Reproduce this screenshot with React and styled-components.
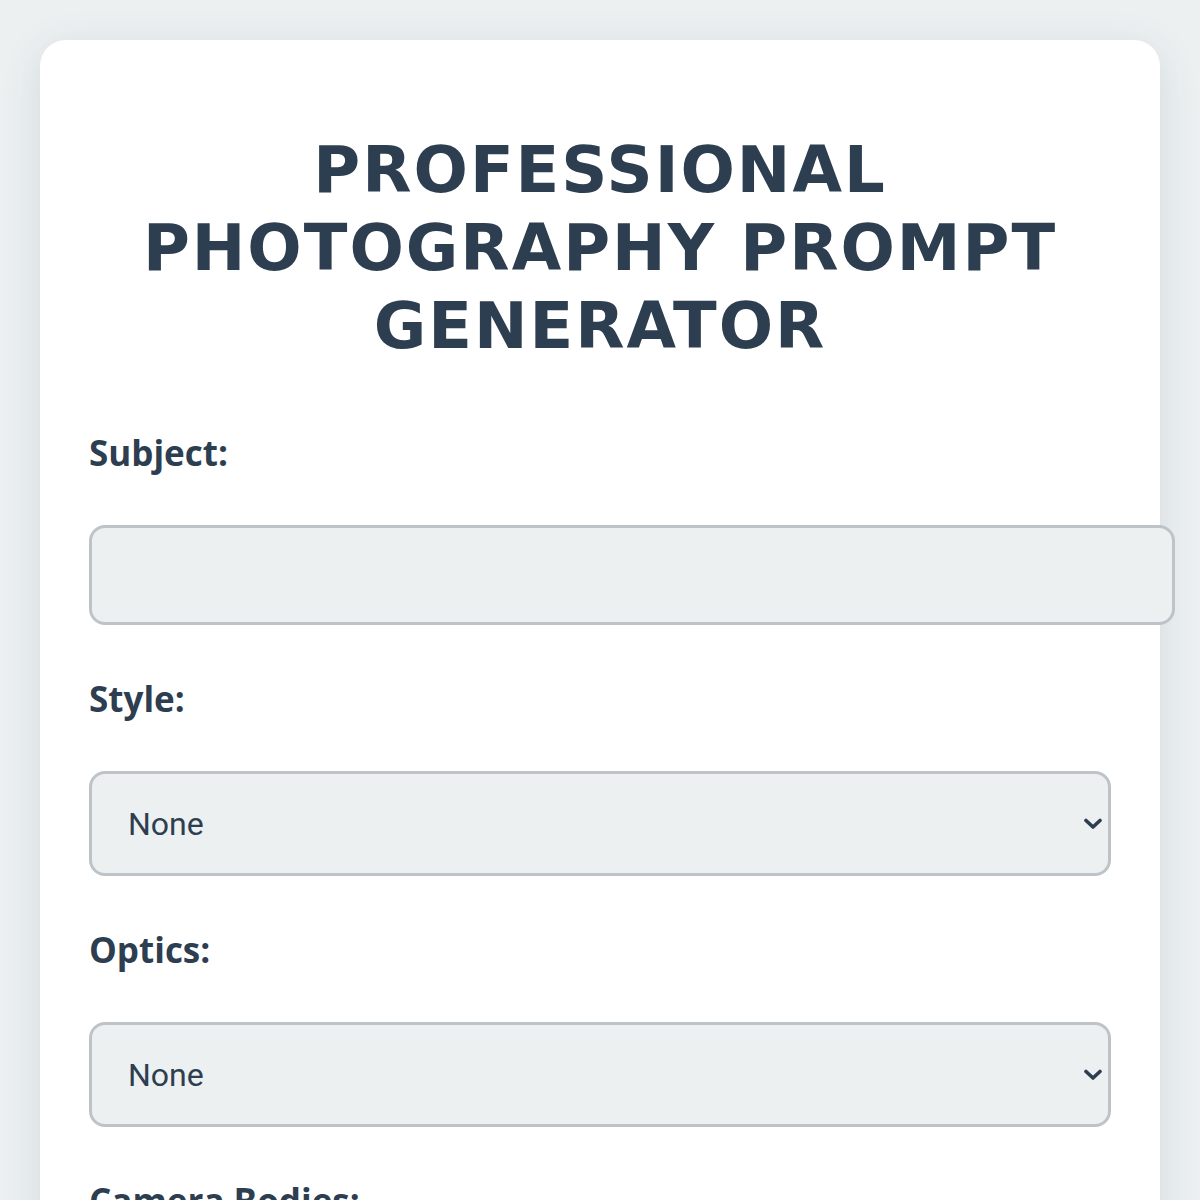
import React, { useState } from "react";
import styled, { createGlobalStyle } from "styled-components";

const GlobalStyle = createGlobalStyle`
  body {
    margin: 0;
    background: #ecf0f1;
    font-family: "Open Sans", "Noto Sans", sans-serif;
    color: #2c3e50;
  }
`;

const styles = ["None", "Portrait", "Landscape", "Street", "Fashion", "Macro"];
const optics = ["None", "Wide Angle", "Telephoto", "Fisheye", "Tilt-Shift"];
const bodies = ["None", "Canon EOS R5", "Nikon Z9", "Sony A1", "Leica M11"];

const Chevron = () => (
  <svg width="18" height="12" viewBox="0 0 18 12">
    <path
      d="M2 2.5 L9 9 L16 2.5"
      fill="none"
      stroke="#2c3e50"
      strokeWidth="3.6"
      strokeLinecap="round"
      strokeLinejoin="round"
    />
  </svg>
);

const SelectField = ({ label, options }) => {
  const [value, setValue] = useState(options[0]);
  return (
    <Field>
      <Label>{label}</Label>
      <SelectWrap>
        <Select value={value} onChange={(e) => setValue(e.target.value)}>
          {options.map((o) => (
            <option key={o}>{o}</option>
          ))}
        </Select>
        <Arrow>
          <Chevron />
        </Arrow>
      </SelectWrap>
    </Field>
  );
};

const App = () => {
  const [subject, setSubject] = useState("");

  return (
    <>
      <GlobalStyle />
      <Page>
        <Card>
          <Title>Professional Photography Prompt Generator</Title>
          <Field>
            <Label>Subject:</Label>
            <Input
              type="text"
              value={subject}
              onChange={(e) => setSubject(e.target.value)}
            />
          </Field>
          <SelectField label="Style:" options={styles} />
          <SelectField label="Optics:" options={optics} />
          <SelectField label="Camera Bodies:" options={bodies} />
        </Card>
      </Page>
    </>
  );
};

export default App;

const Page = styled.div`
  padding: 40px;
`;

const Card = styled.div`
  background: #ffffff;
  border-radius: 26px;
  padding: 48px 49px;
  box-shadow: 0 8px 40px rgba(44, 62, 80, 0.12);
`;

const Title = styled.h1`
  margin: 43px 0 66px;
  text-align: center;
  text-transform: uppercase;
  font-family: "DejaVu Sans", sans-serif;
  font-weight: 700;
  font-size: 64px;
  line-height: 78px;
  letter-spacing: 2px;
  color: #2c3e50;
`;

const Field = styled.div`
  display: flex;
  flex-direction: column;
  margin-bottom: 52px;
`;

const Label = styled.label`
  font-family: "Open Sans", sans-serif;
  font-weight: 700;
  font-size: 35px;
  line-height: 44px;
  margin-bottom: 50px;
  color: #2c3e50;
`;

const Input = styled.input`
  box-sizing: content-box;
  width: 100%;
  height: 36px;
  padding: 29px 29px;
  border: 3px solid #bdc3c7;
  border-radius: 16px;
  background: #ecf0f1;
  font-family: "Roboto", sans-serif;
  font-size: 32px;
  color: #2c3e50;
  outline: none;
`;

const SelectWrap = styled.div`
  position: relative;
`;

const Select = styled.select`
  appearance: none;
  box-sizing: border-box;
  width: 100%;
  height: 105px;
  padding: 0 36px;
  border: 3px solid #bdc3c7;
  border-radius: 16px;
  background: #ecf0f1;
  font-family: "Roboto", sans-serif;
  font-size: 32px;
  color: #2c3e50;
  outline: none;
`;

const Arrow = styled.span`
  position: absolute;
  right: 9px;
  top: 47px;
  display: flex;
  pointer-events: none;
`;
